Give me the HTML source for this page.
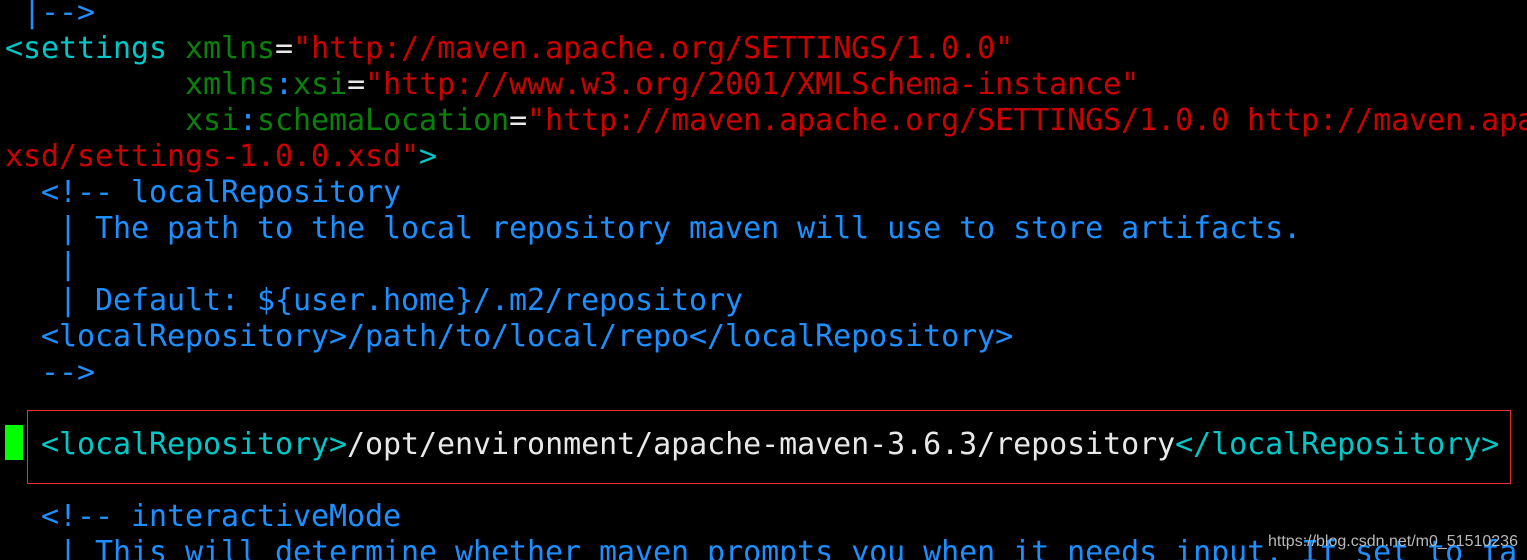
<!DOCTYPE html>
<html><head><meta charset="utf-8"><style>
html,body{margin:0;padding:0;background:#000;width:1527px;height:560px;overflow:hidden;position:relative}
pre{position:absolute;left:5px;top:-5px;width:1522px;overflow:hidden;margin:0;font-family:"DejaVu Sans Mono","Liberation Mono",monospace;font-size:30px;letter-spacing:-0.06px;line-height:36px;color:#e8e8e8;white-space:pre}
.c{color:#00c8c8}.g{color:#0a800a}.r{color:#cd0000}.b{color:#1e8fff}.w{color:#e8e8e8}
#box{position:absolute;left:27px;top:410px;width:1482px;height:72px;border:1px solid #e83030}
#cur{position:absolute;left:5px;top:425px;width:18px;height:35px;background:#00ff00}
#wm{position:absolute;left:1268px;top:533px;font-family:"Liberation Sans",sans-serif;font-size:16px;color:#b8b8b8;white-space:nowrap}
</style></head><body>
<div id="box"></div><div id="cur"></div>
<pre><span class="b"> |--&gt;</span>
<span class="c">&lt;settings</span> <span class="g">xmlns</span><span class="w">=</span><span class="r">"http://maven.apache.org/SETTINGS/1.0.0"</span>
          <span class="g">xmlns</span><span class="b">:</span><span class="g">xsi</span><span class="w">=</span><span class="r">"http://www.w3.org/2001/XMLSchema-instance"</span>
          <span class="g">xsi</span><span class="b">:</span><span class="g">schemaLocation</span><span class="w">=</span><span class="r">"http://maven.apache.org/SETTINGS/1.0.0 http://maven.apa</span>
<span class="r">xsd/settings-1.0.0.xsd"</span><span class="c">&gt;</span>
<span class="b">  &lt;!-- localRepository
   | The path to the local repository maven will use to store artifacts.
   |
   | Default: ${user.home}/.m2/repository
  &lt;localRepository&gt;/path/to/local/repo&lt;/localRepository&gt;
  --&gt;</span>

  <span class="c">&lt;localRepository&gt;</span><span class="w">/opt/environment/apache-maven-3.6.3/repository</span><span class="c">&lt;/localRepository&gt;</span>

<span class="b">  &lt;!-- interactiveMode
   | This will determine whether maven prompts you when it needs input. If set to fa</span></pre>
<div id="wm">https://blog.csdn.net/m0_51510236</div>
</body></html>
